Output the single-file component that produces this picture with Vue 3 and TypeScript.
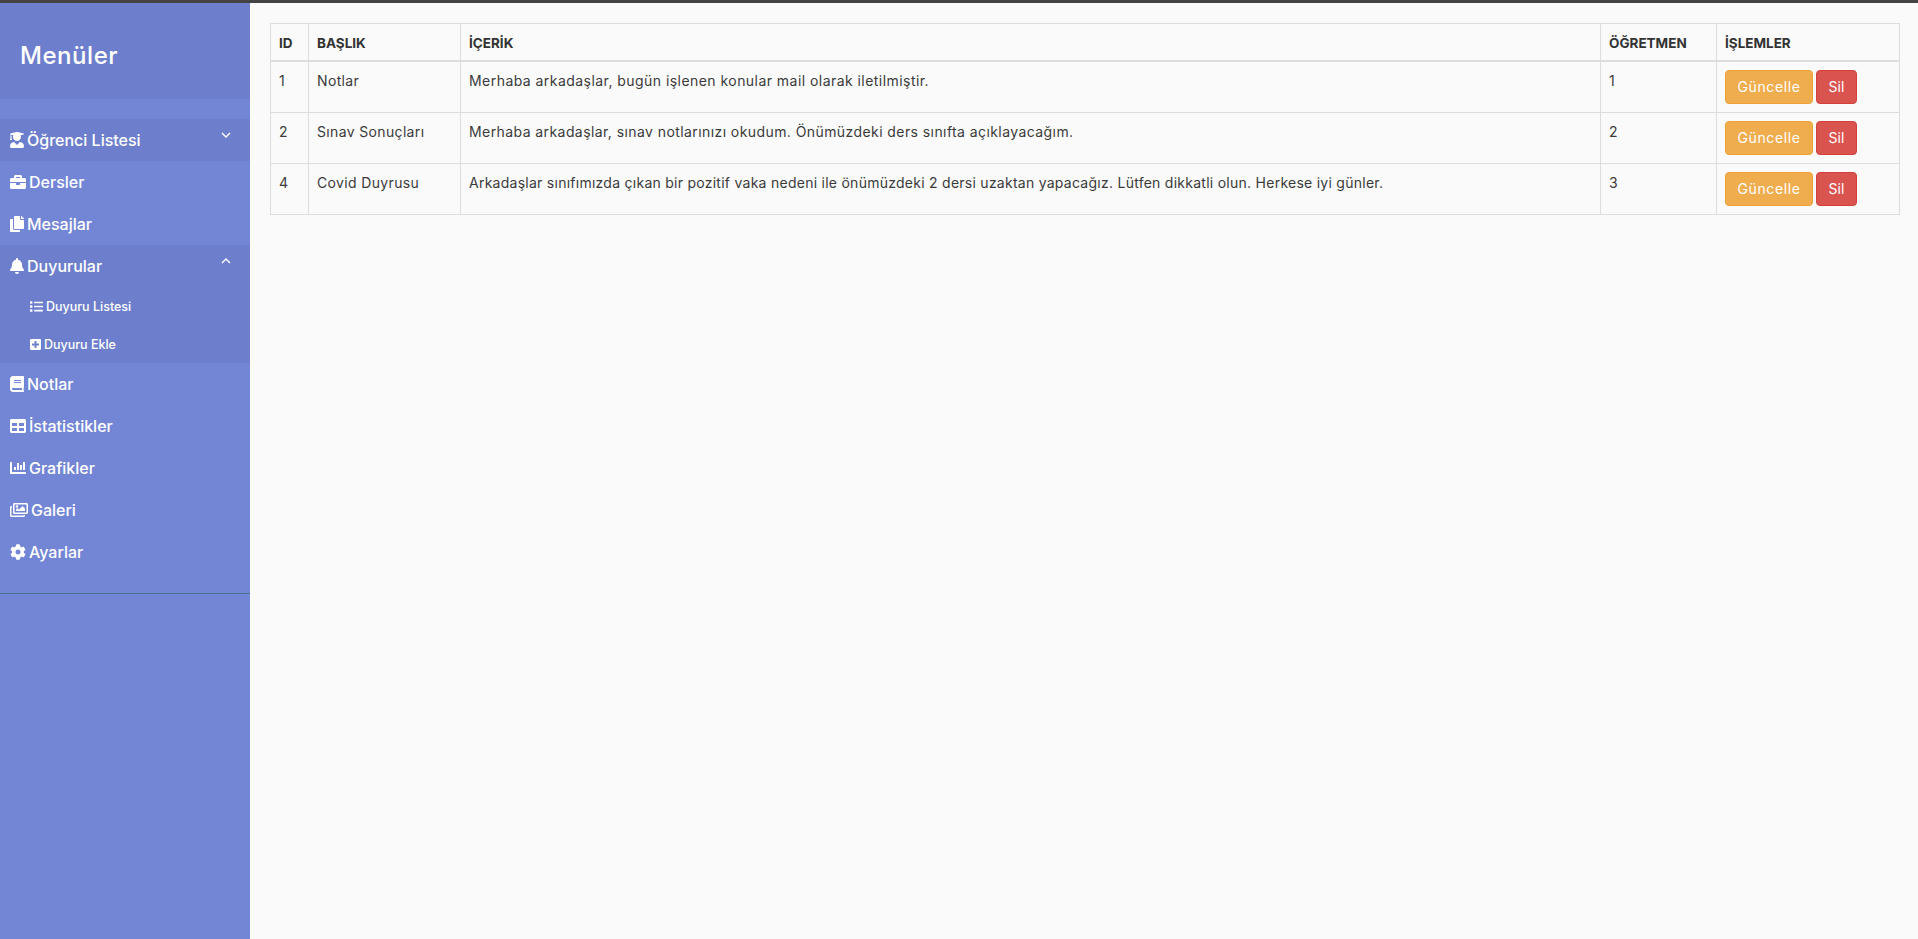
<script setup lang="ts">
interface Row { id: number; title: string; body: string; teacher: number }
const rows: Row[] = [
  { id: 1, title: 'Notlar', body: 'Merhaba arkadaşlar, bugün işlenen konular mail olarak iletilmiştir.', teacher: 1 },
  { id: 2, title: 'Sınav Sonuçları', body: 'Merhaba arkadaşlar, sınav notlarınızı okudum. Önümüzdeki ders sınıfta açıklayacağım.', teacher: 2 },
  { id: 4, title: 'Covid Duyrusu', body: 'Arkadaşlar sınıfımızda çıkan bir pozitif vaka nedeni ile önümüzdeki 2 dersi uzaktan yapacağız. Lütfen dikkatli olun. Herkese iyi günler.', teacher: 3 },
]
</script>

<template>
  <div class="page">
    <aside class="side">
      <div class="brand">Menüler</div>
      <ul class="menu">
        <li class="item active">
          <a class="link">
            <svg class="ico" viewBox="0 0 448 512"><path d="M319.4 320.6L224 416l-95.4-95.4C57.1 323.7 0 382.2 0 454.4v9.6c0 26.5 21.5 48 48 48h352c26.5 0 48-21.5 48-48v-9.6c0-72.2-57.1-130.7-128.6-133.8zM13.6 79.8l6.4 1.5v58.4c-7 4.2-12 11.5-12 20.3 0 8.4 4.6 15.4 11.1 19.7L3.5 242c-1.7 6.9 2.1 14 7.6 14h41.8c5.5 0 9.3-7.1 7.6-14l-15.6-62.3C51.4 175.4 56 168.4 56 160c0-8.8-5-16.1-12-20.3V87.1l66 15.9c-8.6 17.2-14 36.4-14 57 0 70.7 57.3 128 128 128s128-57.3 128-128c0-20.6-5.3-39.8-14-57l96.3-23.2c18.2-4.4 18.2-27.1 0-31.5l-190.4-46c-13-3.1-26.7-3.1-39.7 0L13.6 48.2c-18.1 4.4-18.1 27.2 0 31.6z"/></svg>
            <span>Öğrenci Listesi</span>
          </a>
          <svg class="chev" viewBox="0 0 10 6"><path d="M1 1l4 4 4-4"/></svg>
        </li>
        <li class="item">
          <a class="link">
            <svg class="ico wide" viewBox="0 0 512 512"><path d="M320 336c0 8.84-7.16 16-16 16h-96c-8.84 0-16-7.16-16-16v-48H0v144c0 25.6 22.4 48 48 48h416c25.6 0 48-22.4 48-48V288H320v48zm144-208h-80V80c0-25.6-22.4-48-48-48H176c-25.6 0-48 22.4-48 48v48H48c-25.6 0-48 22.4-48 48v80h512v-80c0-25.6-22.4-48-48-48zm-144 0H192V96h128v32z"/></svg>
            <span>Dersler</span>
          </a>
        </li>
        <li class="item">
          <a class="link">
            <svg class="ico" viewBox="0 0 448 512"><path d="M320 448v40c0 13.255-10.745 24-24 24H24c-13.255 0-24-10.745-24-24V120c0-13.255 10.745-24 24-24h72v296c0 30.879 25.121 56 56 56h168zm0-344V0H152c-13.255 0-24 10.745-24 24v368c0 13.255 10.745 24 24 24h272c13.255 0 24-10.745 24-24V128H344c-13.2 0-24-10.8-24-24zm120.971-31.029L375.029 7.029A24 24 0 0 0 358.059 0H352v96h96v-6.059a24 24 0 0 0-7.029-16.97z"/></svg>
            <span>Mesajlar</span>
          </a>
        </li>
        <li class="group">
          <div class="item">
            <a class="link">
              <svg class="ico" viewBox="0 0 448 512"><path d="M224 512c35.32 0 63.97-28.65 63.97-64H160.03c0 35.35 28.65 64 63.97 64zm215.39-149.71c-19.32-20.76-55.47-51.99-55.47-154.29 0-77.7-54.48-139.9-127.94-155.16V32c0-17.67-14.32-32-31.98-32s-31.98 14.33-31.98 32v20.84C118.56 68.1 64.08 130.3 64.08 208c0 102.3-36.15 133.53-55.47 154.29-6 6.45-8.66 14.16-8.61 21.71.11 16.4 12.98 32 32.1 32h383.8c19.12 0 32-15.6 32.1-32 .05-7.55-2.61-15.27-8.61-21.71z"/></svg>
              <span>Duyurular</span>
            </a>
            <svg class="chev" viewBox="0 0 10 6"><path d="M1 5l4-4 4 4"/></svg>
          </div>
          <a class="sub">
            <svg class="sico" viewBox="0 0 512 512"><path d="M80 368H16a16 16 0 0 0-16 16v64a16 16 0 0 0 16 16h64a16 16 0 0 0 16-16v-64a16 16 0 0 0-16-16zm0-320H16A16 16 0 0 0 0 64v64a16 16 0 0 0 16 16h64a16 16 0 0 0 16-16V64a16 16 0 0 0-16-16zm0 160H16a16 16 0 0 0-16 16v64a16 16 0 0 0 16 16h64a16 16 0 0 0 16-16v-64a16 16 0 0 0-16-16zm416 176H176a16 16 0 0 0-16 16v32a16 16 0 0 0 16 16h320a16 16 0 0 0 16-16v-32a16 16 0 0 0-16-16zm0-320H176a16 16 0 0 0-16 16v32a16 16 0 0 0 16 16h320a16 16 0 0 0 16-16V80a16 16 0 0 0-16-16zm0 160H176a16 16 0 0 0-16 16v32a16 16 0 0 0 16 16h320a16 16 0 0 0 16-16v-32a16 16 0 0 0-16-16z"/></svg>
            <span>Duyuru Listesi</span>
          </a>
          <a class="sub">
            <svg class="sico sq" viewBox="0 0 448 512"><path d="M400 32H48C21.5 32 0 53.5 0 80v352c0 26.5 21.5 48 48 48h352c26.5 0 48-21.5 48-48V80c0-26.5-21.5-48-48-48zm-32 252c0 6.6-5.4 12-12 12h-92v92c0 6.6-5.4 12-12 12h-56c-6.6 0-12-5.4-12-12v-92H92c-6.6 0-12-5.4-12-12v-56c0-6.6 5.4-12 12-12h92v-92c0-6.6 5.4-12 12-12h56c6.6 0 12 5.4 12 12v92h92c6.6 0 12 5.4 12 12v56z"/></svg>
            <span>Duyuru Ekle</span>
          </a>
        </li>
        <li class="item">
          <a class="link">
            <svg class="ico" viewBox="0 0 448 512"><path d="M448 360V24c0-13.3-10.7-24-24-24H96C43 0 0 43 0 96v320c0 53 43 96 96 96h328c13.3 0 24-10.7 24-24v-16c0-7.5-3.5-14.3-8.9-18.7-4.2-15.4-4.2-59.3 0-74.7 5.4-4.3 8.9-11.1 8.9-18.6zM128 134c0-3.3 2.7-6 6-6h212c3.3 0 6 2.7 6 6v20c0 3.3-2.7 6-6 6H134c-3.3 0-6-2.7-6-6v-20zm0 64c0-3.3 2.7-6 6-6h212c3.3 0 6 2.7 6 6v20c0 3.3-2.7 6-6 6H134c-3.3 0-6-2.7-6-6v-20zm253.4 250H96c-17.7 0-32-14.3-32-32 0-17.6 14.4-32 32-32h285.4c-1.9 17.1-1.9 46.9 0 64z"/></svg>
            <span>Notlar</span>
          </a>
        </li>
        <li class="item">
          <a class="link">
            <svg class="ico wide" viewBox="0 0 512 512"><path d="M464 32H48C21.49 32 0 53.49 0 80v352c0 26.51 21.49 48 48 48h416c26.51 0 48-21.49 48-48V80c0-26.51-21.49-48-48-48zM224 416H64v-96h160v96zm0-160H64v-96h160v96zm224 160H288v-96h160v96zm0-160H288v-96h160v96z"/></svg>
            <span>İstatistikler</span>
          </a>
        </li>
        <li class="item">
          <a class="link">
            <svg class="ico wide" viewBox="0 0 512 512"><path d="M332.8 320h38.4c6.4 0 12.8-6.4 12.8-12.8V172.8c0-6.4-6.4-12.8-12.8-12.8h-38.4c-6.4 0-12.8 6.4-12.8 12.8v134.4c0 6.4 6.4 12.8 12.8 12.8zm96 0h38.4c6.4 0 12.8-6.4 12.8-12.8V76.8c0-6.4-6.4-12.8-12.8-12.8h-38.4c-6.4 0-12.8 6.4-12.8 12.8v230.4c0 6.4 6.4 12.8 12.8 12.8zm-288 0h38.4c6.4 0 12.8-6.4 12.8-12.8v-70.4c0-6.4-6.4-12.8-12.8-12.8h-38.4c-6.4 0-12.8 6.4-12.8 12.8v70.4c0 6.4 6.4 12.8 12.8 12.8zm96 0h38.4c6.4 0 12.8-6.4 12.8-12.8V108.8c0-6.4-6.4-12.8-12.8-12.8h-38.4c-6.4 0-12.8 6.4-12.8 12.8v198.4c0 6.4 6.4 12.8 12.8 12.8zM496 384H64V80c0-8.84-7.16-16-16-16H16C7.16 64 0 71.16 0 80v336c0 17.67 14.33 32 32 32h464c8.84 0 16-7.16 16-16v-32c0-8.84-7.16-16-16-16z"/></svg>
            <span>Grafikler</span>
          </a>
        </li>
        <li class="item">
          <a class="link">
            <svg class="ico wider" viewBox="0 0 576 512"><path d="M480 416v16c0 26.51-21.49 48-48 48H48c-26.51 0-48-21.49-48-48V176c0-26.51 21.49-48 48-48h16v48H54a6 6 0 0 0-6 6v244a6 6 0 0 0 6 6h372a6 6 0 0 0 6-6v-10h48zm42-336H150a6 6 0 0 0-6 6v244a6 6 0 0 0 6 6h372a6 6 0 0 0 6-6V86a6 6 0 0 0-6-6zm6-48c26.51 0 48 21.49 48 48v256c0 26.51-21.49 48-48 48H144c-26.51 0-48-21.49-48-48V80c0-26.51 21.49-48 48-48h384zM264 144c0 22.091-17.909 40-40 40s-40-17.909-40-40 17.909-40 40-40 40 17.909 40 40zm-72 96l39.515-39.515c4.686-4.686 12.284-4.686 16.971 0L288 240l103.515-103.515c4.686-4.686 12.284-4.686 16.971 0L480 208v80H192v-48z"/></svg>
            <span>Galeri</span>
          </a>
        </li>
        <li class="item">
          <a class="link">
            <svg class="ico wide" viewBox="0 0 512 512"><path d="M487.4 315.7l-42.6-24.6c4.3-23.2 4.3-47 0-70.2l42.6-24.6c4.9-2.8 7.1-8.6 5.5-14-11.1-35.6-30-67.8-54.7-94.6-3.8-4.1-10-5.1-14.8-2.3L380.8 110c-17.9-15.4-38.5-27.3-60.8-35.1V25.8c0-5.6-3.9-10.5-9.4-11.7-36.7-8.2-74.3-7.8-109.2 0-5.5 1.2-9.4 6.1-9.4 11.7V75c-22.2 7.9-42.8 19.8-60.8 35.1L88.7 85.5c-4.9-2.8-11-1.9-14.8 2.3-24.7 26.7-43.6 58.9-54.7 94.6-1.7 5.4.6 11.2 5.5 14L67.3 221c-4.3 23.2-4.3 47 0 70.2l-42.6 24.6c-4.9 2.8-7.1 8.6-5.5 14 11.1 35.6 30 67.8 54.7 94.6 3.8 4.1 10 5.1 14.8 2.3l42.6-24.6c17.9 15.4 38.5 27.3 60.8 35.1v49.2c0 5.6 3.9 10.5 9.4 11.7 36.7 8.2 74.3 7.8 109.2 0 5.5-1.2 9.4-6.1 9.4-11.7v-49.2c22.2-7.9 42.8-19.8 60.8-35.1l42.6 24.6c4.9 2.8 11 1.9 14.8-2.3 24.7-26.7 43.6-58.9 54.7-94.6 1.5-5.5-.7-11.3-5.6-14.1zM256 336c-44.1 0-80-35.9-80-80s35.9-80 80-80 80 35.9 80 80-35.9 80-80 80z"/></svg>
            <span>Ayarlar</span>
          </a>
        </li>
      </ul>
    </aside>
    <main class="content">
      <table class="grid">
        <colgroup>
          <col class="c-id" /><col class="c-title" /><col /><col class="c-teacher" /><col class="c-actions" />
        </colgroup>
        <thead>
          <tr>
            <th>ID</th><th>BAŞLIK</th><th>İÇERİK</th><th>ÖĞRETMEN</th><th>İŞLEMLER</th>
          </tr>
        </thead>
        <tbody>
          <tr v-for="r in rows" :key="r.id">
            <td>{{ r.id }}</td>
            <td class="title">{{ r.title }}</td>
            <td class="body">{{ r.body }}</td>
            <td>{{ r.teacher }}</td>
            <td class="actions">
              <button class="btn warn">Güncelle</button>
              <button class="btn danger">Sil</button>
            </td>
          </tr>
        </tbody>
      </table>
    </main>
  </div>
</template>

<style>
html, body { margin: 0; background: #fafafa; }
</style>

<style scoped>
.page {
  display: flex;
  min-height: 936px;
  border-top: 3px solid #444;
  font-family: Inter, "Noto Sans", sans-serif;
  background: #fafafa;
}
.side {
  width: 250px;
  flex: none;
  background: #7386d5;
  color: #fff;
}
.brand {
  height: 96px;
  box-sizing: border-box;
  padding: 9px 20px 0;
  display: flex;
  align-items: center;
  font-size: 24px;
  font-weight: 500;
  letter-spacing: 0.55px;
  background: #6d7fcc;
}
.menu {
  list-style: none;
  margin: 0;
  padding: 20px 0;
  border-bottom: 1px solid #47748b;
}
.item {
  height: 42px;
  display: flex;
  align-items: center;
  justify-content: space-between;
  padding: 0 19px 0 10px;
  font-size: 16px;
  font-weight: 500;
  box-sizing: border-box;
}
.active, .group { background: #6d7fcc; }
.link { display: flex; align-items: center; gap: 3px; }
.ico { width: 14px; height: 16px; fill: #fff; flex: none; }
.wide { width: 16px; }
.wider { width: 18px; }
.chev { width: 10px; height: 6px; fill: none; stroke: #fff; stroke-width: 1.4; margin-top: -10px; }
.sub {
  height: 38px;
  display: flex;
  align-items: center;
  gap: 3px;
  padding-left: 30px;
  font-size: 12.5px;
  font-weight: 500;
}
.sico { width: 13px; height: 13px; fill: #fff; flex: none; }
.sq { width: 11px; }
.content { flex: 1; padding: 20px 18px 0 20px; min-width: 0; }
.grid {
  width: 100%;
  table-layout: fixed;
  border-collapse: collapse;
  font-size: 14px;
  color: #3a3a3a;
}
.c-id { width: 38px; }
.c-title { width: 152px; }
.c-teacher { width: 116px; }
.c-actions { width: 183px; }
th, td {
  border: 1px solid #ddd;
  padding: 9px 8px 7px;
  text-align: left;
  vertical-align: top;
  line-height: 20px;
  font-weight: 400;
}
th { font-weight: 700; font-size: 13.5px; color: #333; border-bottom-width: 2px; height: 20px; }
td { height: 34px; }
.title { letter-spacing: 0.35px; }
tr:nth-child(1) .body { letter-spacing: 0.45px; }
tr:nth-child(2) .body { letter-spacing: 0.42px; }
tr:nth-child(3) .body { letter-spacing: 0.26px; }
.actions { padding: 8px; }
.btn {
  font: inherit;
  font-weight: 400;
  height: 34px;
  box-sizing: border-box;
  border-radius: 4px;
  color: #fff;
  padding: 0;
  border: 1px solid;
  margin-right: 3px;
  vertical-align: top;
}
.warn { background: #f0ad4e; border-color: #eea236; width: 88px; letter-spacing: 0.6px; }
.danger { background: #d9534f; border-color: #d43f3a; width: 41px; }
</style>
